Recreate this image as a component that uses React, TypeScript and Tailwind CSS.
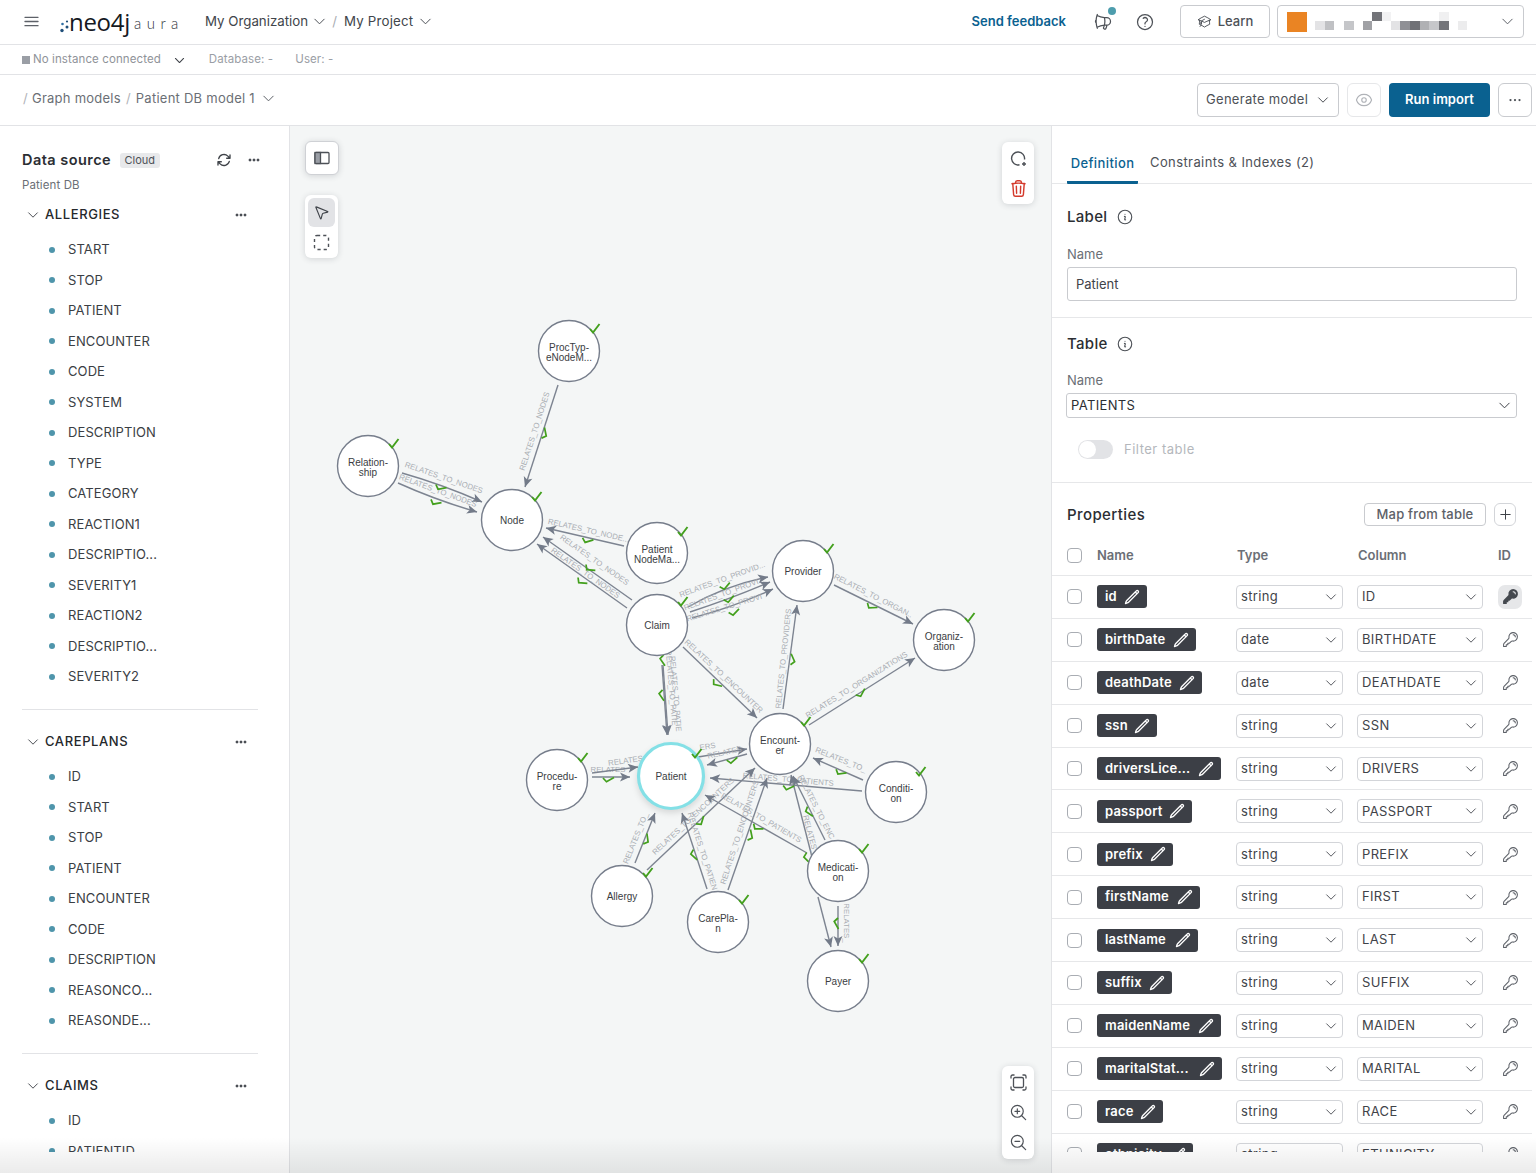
import React from "react";
import { MousePointer2 } from "lucide-react";
import {
  HiOutlineBars3, HiOutlineChevronDown, HiOutlineMegaphone, HiOutlineQuestionMarkCircle,
  HiOutlineAcademicCap, HiOutlineEye, HiEllipsisHorizontal, HiOutlineArrowPath,
  HiOutlineInformationCircle, HiOutlinePlus, HiOutlinePencil, HiOutlineKey, HiKey,
  HiOutlineTrash, HiOutlineMagnifyingGlassPlus, HiOutlineMagnifyingGlassMinus,
} from "react-icons/hi2";

type Edge = { p: number[]; c?: number; l?: [string, number, number, number]; k?: [number, number, number] };

const edges: Edge[] = [
  { p: [558, 385, 525, 487], l: ["RELATES_TO_NODES", 537, 432, -72], k: [545, 434, -72] },
  { p: [402, 473, 482, 502], c: -3, l: ["RELATES_TO_NODES", 443, 480, 19], k: [440, 488, 19] },
  { p: [398, 483, 477, 512], c: 3, l: ["RELATES_TO_NODES", 437, 493, 20], k: [435, 503, 20] },
  { p: [624, 546, 546, 528], l: ["RELATES_TO_NODE...", 588, 533, 13], k: [587, 541, 13] },
  { p: [632, 600, 543, 537], l: ["RELATES_TO_NODES", 593, 562, 35], k: [589, 569, 35] },
  { p: [627, 608, 537, 544], l: ["RELATES_TO_NODES", 584, 575, 35], k: [581, 582, 35] },
  { p: [688, 607, 768, 577], c: -7, l: ["RELATES_TO_PROVID...", 723, 582, -20], k: [725, 587, -20] },
  { p: [690, 612, 770, 582], c: 2, l: ["RELATES_TO_PROVI", 722, 597, -20], k: [729, 600, -20] },
  { p: [692, 618, 773, 589], c: 4, l: ["RELATES_TO_PROVI", 725, 610, -17], k: [734, 613, -17] },
  { p: [834, 585, 913, 624], l: ["RELATES_TO_ORGAN..", 872, 598, 27], k: [871, 607, 27] },
  { p: [783, 709, 797, 605], l: ["RELATES_TO_PROVIDERS", 786, 659, -84], k: [793, 660, -84] },
  { p: [809, 725, 915, 658], l: ["RELATES_TO_ORGANIZATIONS", 858, 687, -32], k: [861, 694, -32] },
  { p: [683, 647, 757, 718], l: ["RELATES_TO_ENCOUNTER", 722, 678, 43], k: [716, 684, 43] },
  { p: [662, 665, 667, 735], l: ["RELATES_TO_PATIE", 669, 688, 85], k: [662, 660, 85] },
  { p: [663, 665, 668, 735], l: ["RELATES_TO_PATIE", 673, 694, 85], k: [661, 695, 85] },
  { p: [698, 757, 747, 749], l: ["ERS", 708, 749, -9] },
  { p: [747, 754, 707, 765], l: ["RELATES", 725, 755, -12], k: [732, 761, -12] },
  { p: [863, 780, 813, 758], l: ["RELATES_TO_", 840, 762, 22], k: [840, 773, 22] },
  { p: [862, 791, 710, 778], l: ["RELATES_TO_PATIENTS", 788, 782, 5], k: [788, 788, 5] },
  { p: [592, 777, 630, 777], l: ["RELATES", 608, 772, 0], k: [608, 780, 0] },
  { p: [592, 773, 638, 767], l: ["RELATES_", 628, 763, -8] },
  { p: [635, 863, 655, 813], l: ["RELATES_TO_", 638, 839, -68], k: [647, 840, -68] },
  { p: [647, 870, 755, 768], l: ["RELATES_TO_ENCOUNTERS", 695, 818, -43], k: [701, 822, -43] },
  { p: [707, 889, 682, 813], l: ["RELATES_TO_PATIEN", 700, 852, 72], k: [693, 855, 72] },
  { p: [728, 890, 767, 778], l: ["RELATES_TO_ENCOUNTERS", 742, 833, -72], k: [751, 836, -72] },
  { p: [807, 853, 705, 795], l: ["RELATES_TO_PATIENTS", 760, 820, 30], k: [757, 828, 30] },
  { p: [825, 840, 793, 776], l: ["RELATES_TO_ENC", 814, 808, 63], k: [808, 812, 63] },
  { p: [812, 857, 791, 775], l: ["RELATES_", 808, 835, 75], k: [806, 858, 75] },
  { p: [818, 897, 831, 947] },
  { p: [838, 906, 838, 946], l: ["RELATES_", 844, 923, 90], k: [836, 923, 90] },
];

const nodes: { x: number; y: number; t: string[]; cx: number; cy: number; active?: boolean }[] = [
  { x: 569, y: 351, t: ["ProcTyp-", "eNodeM..."], cx: 595, cy: 329 },
  { x: 368, y: 466, t: ["Relation-", "ship"], cx: 394, cy: 444 },
  { x: 512, y: 520, t: ["Node"], cx: 537, cy: 497 },
  { x: 657, y: 553, t: ["Patient", "NodeMa..."], cx: 683, cy: 532 },
  { x: 657, y: 625, t: ["Claim"], cx: 683, cy: 602 },
  { x: 803, y: 571, t: ["Provider"], cx: 829, cy: 549 },
  { x: 944, y: 640, t: ["Organiz-", "ation"], cx: 970, cy: 618 },
  { x: 780, y: 744, t: ["Encount-", "er"], cx: 806, cy: 722 },
  { x: 671, y: 776, t: ["Patient"], cx: 697, cy: 754, active: true },
  { x: 557, y: 780, t: ["Procedu-", "re"], cx: 583, cy: 758 },
  { x: 896, y: 792, t: ["Conditi-", "on"], cx: 921, cy: 772 },
  { x: 622, y: 896, t: ["Allergy"], cx: 648, cy: 873 },
  { x: 718, y: 922, t: ["CarePla-", "n"], cx: 744, cy: 900 },
  { x: 838, y: 871, t: ["Medicati-", "on"], cx: 864, cy: 849 },
  { x: 838, y: 981, t: ["Payer"], cx: 864, cy: 959 },
];

function arrow(x1: number, y1: number, x2: number, y2: number) {
  const a = Math.atan2(y2 - y1, x2 - x1);
  const len = 10, w = 4.5;
  const bx = x2 - len * Math.cos(a), by = y2 - len * Math.sin(a);
  const nx = -Math.sin(a) * w, ny = Math.cos(a) * w;
  const ix = x2 - (len - 2.5) * Math.cos(a), iy = y2 - (len - 2.5) * Math.sin(a);
  return `${x2},${y2} ${bx + nx},${by + ny} ${ix},${iy} ${bx - nx},${by - ny}`;
}

function Graph() {
  return (
    <svg className="absolute inset-0" width={761} height={1047} viewBox="290 126 761 1047">
      <g style={{ fontFamily: '"Liberation Sans", sans-serif' }}>
        {edges.map((e, i) => {
          const [x1, y1, x2, y2] = e.p;
          const c = e.c ?? 0;
          const dx = x2 - x1, dy = y2 - y1, n = Math.hypot(dx, dy);
          const mx = (x1 + x2) / 2 - (dy / n) * c, my = (y1 + y2) / 2 + (dx / n) * c;
          return (
            <g key={i}>
              <path d={`M${x1},${y1} Q${mx},${my} ${x2},${y2}`} fill="none" stroke="#7d8491" strokeWidth={1.4} />
              <polygon points={c ? arrow(mx, my, x2, y2) : arrow(x1, y1, x2, y2)} fill="#737b89" />
              {e.l && (
                <text x={0} y={0} fontSize={7.8} fill="#a9adb3" textAnchor="middle" transform={`translate(${e.l[1]},${e.l[2]}) rotate(${e.l[3]})`}>
                  {e.l[0]}
                </text>
              )}
            </g>
          );
        })}
        {edges.map((e, i) =>
          e.k ? (
            <path key={i} d="M-5,-2 L-1.500,1.800 L6,-2.500" fill="none" stroke="#43a01d" strokeWidth={1.7} transform={`translate(${e.k[0]},${e.k[1]}) rotate(${e.k[2]})`} />
          ) : null
        )}
        {nodes.map((n) => (
          <g key={n.t.join("")}>
            {n.active ? (
              <circle cx={n.x} cy={n.y} r={32.5} fill="#fff" stroke="#84e0e6" strokeWidth={3.2} className="drop-shadow-md" />
            ) : (
              <circle cx={n.x} cy={n.y} r={30.5} fill="#fff" stroke="#767d8b" strokeWidth={1.4} />
            )}
            {n.t.map((line, idx) => (
              <text key={idx} x={n.x} y={n.y + (n.t.length === 1 ? 4 : idx === 0 ? -0.5 : 9.5)} fontSize={10} fill="#3a3d42" textAnchor="middle">
                {line}
              </text>
            ))}
            <path d={`M${n.cx - 5},${n.cy} l3,3.5 l6.5,-8.5`} fill="none" stroke="#43a01d" strokeWidth={1.9} />
          </g>
        ))}
      </g>
    </svg>
  );
}

const Chevron = ({ className = "w-[15px] h-[15px] text-[#4d5157]" }: { className?: string }) => (
  <HiOutlineChevronDown className={className} strokeWidth={1.6} />
);

function Logo() {
  return (
    <div className="flex items-center ml-[19px] w-[122px] relative h-[30px]">
      <svg className="w-[9px] h-[14px] mt-[8px] shrink-0" viewBox="0 0 9 14">
        <circle cx="2" cy="11.500" r="1.700" fill="#1f4e79" />
        <circle cx="7" cy="8" r="1.500" fill="#1f4e79" />
        <circle cx="2.500" cy="5" r="1.300" fill="#2f6ea3" />
        <circle cx="7" cy="2.500" r="1.100" fill="#1f4e79" />
      </svg>
      <span className="text-[24px] leading-[30px] text-[#15191f] tracking-[-0.3px] font-[500] [font-family:'Open_Sans',sans-serif]">neo4j</span>
      <span className="ml-[4px] mt-[2px] text-[15px] leading-[20px] tracking-[5.5px] text-[#30343a] font-[300] [font-family:Lato,sans-serif]">aura</span>
    </div>
  );
}

function Header() {
  const noise: [number, number, number, number, string][] = [
    [1315, 20, 10, 9, "#e3e3e5"], [1325, 20, 9, 9, "#c0c1c4"], [1344, 20, 10, 9, "#c5c6c9"],
    [1363, 20, 9, 9, "#a0a1a5"], [1372, 11, 10, 9, "#737479"], [1382, 11, 9, 9, "#f2f2f3"],
    [1391, 20, 9, 9, "#e3e3e5"], [1400, 20, 10, 9, "#8f9095"], [1410, 20, 10, 9, "#707176"],
    [1420, 20, 9, 9, "#b0b1b4"], [1429, 20, 10, 9, "#c6c7ca"], [1439, 20, 10, 9, "#737479"],
    [1439, 11, 10, 9, "#f0f0f1"], [1458, 20, 9, 9, "#ececed"],
  ];
  return (
    <div className="h-[45px] shrink-0 border-b border-[#e2e3e6] flex items-center relative text-[#41454b] pb-[1px]">
      <HiOutlineBars3 className="w-[19px] h-[19px] ml-[22px] text-[#5d6168]" strokeWidth={1.6} />
      <Logo />
      <div className="flex items-center ml-[23px] text-[13.3px] gap-[4px]">
        <span>My Organization</span>
        <Chevron />
        <span className="text-[#a9adb3] ml-[1px]">/</span>
        <span className="ml-[3px] tracking-[0.2px]">My Project</span>
        <Chevron className="w-[15px] h-[15px] text-[#4d5157] ml-[1px]" />
      </div>
      <div className="flex-1" />
      <span className="text-[13px] font-[600] text-[#0a6190]">Send feedback</span>
      <div className="relative ml-[27px] w-[20px] h-[20px]">
        <HiOutlineMegaphone className="w-[20px] h-[20px] -scale-x-100 text-[#4d5157]" />
        <span className="absolute top-[-5px] right-[-3px] w-[8px] h-[8px] rounded-full bg-[#4d9dad]" />
      </div>
      <HiOutlineQuestionMarkCircle className="w-[20px] h-[20px] ml-[22px] text-[#4d5157]" />
      <div className="ml-[25px] w-[90px] h-[33px] border border-[#c9cbcf] rounded-[4px] flex items-center justify-center gap-[6px] text-[13px] font-[500] text-[#4d5157]">
        <HiOutlineAcademicCap className="w-[15px] h-[15px]" />
        Learn
      </div>
      <div className="ml-[7px] mr-[12px] w-[247px] h-[33px] border border-[#c9cbcf] rounded-[4px] flex items-center relative">
        <span className="ml-[9px] w-[20px] h-[20px] bg-[#ea8423]" />
        <svg className="absolute left-[-1px] top-[-1px]" width="247" height="33" viewBox="1277 4 247 33">
          {noise.map((n, i) => <rect key={i} x={n[0]} y={n[1]} width={n[2]} height={n[3]} fill={n[4]} />)}
        </svg>
        <Chevron className="w-[15px] h-[15px] text-[#5d6168] ml-auto mr-[8px]" />
      </div>
    </div>
  );
}

function SubBar() {
  return (
    <div className="h-[30px] shrink-0 border-b border-[#e2e3e6] flex items-center pt-[1px] text-[11.5px] tracking-[0.1px] text-[#9a9ea5]">
      <span className="ml-[22px] w-[8px] h-[8px] bg-[#9a9ea5]" />
      <span className="ml-[3px] text-[#8f9399]">No instance connected</span>
      <HiOutlineChevronDown className="ml-[12px] w-[13px] h-[13px] text-[#3f4349]" strokeWidth={2} />
      <span className="ml-[23px]">Database: -</span>
      <span className="ml-[22px]">User: -</span>
    </div>
  );
}

function Crumbs() {
  return (
    <div className="h-[51px] shrink-0 border-b border-[#e2e3e6] flex items-center relative">
      <div className="flex items-center ml-[23px] text-[13px] text-[#6b6f76] tracking-[0.25px] mt-[-3px]">
        <span className="text-[#b0b3b8] mr-[4px]">/</span>
        <span>Graph models</span>
        <span className="text-[#b0b3b8] mx-[5px]">/</span>
        <span>Patient DB model 1</span>
        <Chevron className="w-[15px] h-[15px] text-[#5d6168] ml-[6px]" />
      </div>
      <div className="flex-1" />
      <div className="flex items-center gap-[8px] mr-[4px] mt-[-1px]">
        <div className="w-[142px] h-[34px] border border-[#c9cbcf] rounded-[4px] flex items-center justify-between px-[8px] pt-[1px] text-[13px] tracking-[0.3px] text-[#4d5157]">
          Generate model
          <Chevron className="w-[14px] h-[14px] text-[#3f4349]" />
        </div>
        <div className="w-[34px] h-[34px] border border-[#e6e7e9] rounded-[6px] flex items-center justify-center">
          <HiOutlineEye className="w-[18px] h-[18px] text-[#b0b3b8]" />
        </div>
        <div className="w-[101px] h-[34px] bg-[#0a6190] rounded-[4px] flex items-center justify-center pt-[1px] text-white text-[13px] font-[600]">
          Run import
        </div>
        <div className="w-[34px] h-[34px] border border-[#c9cbcf] rounded-[6px] flex items-center justify-center">
          <HiEllipsisHorizontal className="w-[18px] h-[18px] text-[#4d5157]" />
        </div>
      </div>
    </div>
  );
}

const sections: { name: string; items: string[]; clip?: boolean }[] = [
  { name: "ALLERGIES", items: ["START", "STOP", "PATIENT", "ENCOUNTER", "CODE", "SYSTEM", "DESCRIPTION", "TYPE", "CATEGORY", "REACTION1", "DESCRIPTIO...", "SEVERITY1", "REACTION2", "DESCRIPTIO...", "SEVERITY2"] },
  { name: "CAREPLANS", items: ["ID", "START", "STOP", "PATIENT", "ENCOUNTER", "CODE", "DESCRIPTION", "REASONCO...", "REASONDE..."] },
  { name: "CLAIMS", items: ["ID", "PATIENTID"], clip: true },
];

function LeftPanel() {
  return (
    <div className="w-[290px] shrink-0 border-r border-[#e2e3e6] bg-white text-[#2f3338]">
      <div className="h-[1026px] overflow-hidden">
        <div className="flex items-center h-[18px] mt-[25px] ml-[22px]">
          <span className="text-[14.5px] font-[600] tracking-[0.45px] text-[#2b2e33]">Data source</span>
          <span className="ml-[9px] h-[15px] px-[4.500px] bg-[#e8e9eb] rounded-[3px] text-[11px] leading-[15px] text-[#4d5157]">Cloud</span>
          <HiOutlineArrowPath className="w-[16px] h-[16px] ml-[56px] text-[#3f4349]" strokeWidth={2} />
          <HiEllipsisHorizontal className="w-[16px] h-[16px] ml-[14px] text-[#3f4349]" strokeWidth={1.5} />
        </div>
        <div className="ml-[22px] mt-[9px] h-[14px] text-[11.5px] tracking-[0.1px] leading-[14px] text-[#6b6f76]">Patient DB</div>
        <div className="mt-[13px]">
          {sections.map((s, i) => (
            <div key={s.name} className={i > 0 ? "mt-[22.500px]" : ""}>
              <div className="flex items-center h-[20px] ml-[26px] mb-[9.500px]">
                <Chevron className="w-[14px] h-[14px] text-[#3f4349]" />
                <span className="ml-[5px] text-[13px] font-[500] tracking-[0.6px] text-[#25282c]">{s.name}</span>
                <HiEllipsisHorizontal className="w-[16px] h-[16px] ml-auto mr-[40px] text-[#3f4349]" strokeWidth={1.5} />
              </div>
              <div className="ml-[49px]">
                {s.items.map((it, idx) => (
                  <div key={idx} className="flex items-center h-[30.500px]">
                    <span className="w-[6px] h-[6px] rounded-full bg-[#4f95ab]" />
                    <span className="ml-[13px] text-[13px] tracking-[0.1px] text-[#3a3e44]">{it}</span>
                  </div>
                ))}
              </div>
              {!s.clip && <div className="mt-[16.500px] ml-[22px] w-[236px] border-b border-[#e2e3e6]" />}
            </div>
          ))}
        </div>
      </div>
    </div>
  );
}

function ToolPanel({ className, children }: { className: string; children: React.ReactNode }) {
  return <div className={`absolute bg-white rounded-[6px] shadow-[0_1px_6px_rgba(30,40,50,0.16)] flex flex-col items-center ${className}`}>{children}</div>;
}

function Canvas() {
  return (
    <div className="flex-1 relative bg-[#f4f6f6] overflow-hidden">
      <Graph />
      <ToolPanel className="left-[15px] top-[15px] w-[34px] h-[34px] border border-[#cfd1d5] justify-center">
        <svg className="w-[16px] h-[16px]" viewBox="0 0 16 16" fill="none" stroke="#4d5157" strokeWidth="1.3">
          <rect x="1" y="2.500" width="14" height="11" rx="1" />
          <rect x="1" y="2.500" width="5.500" height="11" fill="#9a9ea5" />
        </svg>
      </ToolPanel>
      <ToolPanel className="left-[15px] top-[69px] w-[33px] h-[63px] pt-[3px]">
        <div className="w-[27px] h-[29px] bg-[#e2e3e6] rounded-[6px] flex items-center justify-center">
          <MousePointer2 className="w-[17px] h-[17px] text-[#3f4349]" strokeWidth={1.6} />
        </div>
        <svg className="w-[17px] h-[17px] mt-[7px]" viewBox="0 0 17 17" fill="none" stroke="#4d5157" strokeWidth="1.4" strokeDasharray="3.200 3">
          <rect x="1.500" y="1.500" width="14" height="14" rx="2.500" />
        </svg>
      </ToolPanel>
      <ToolPanel className="left-[712px] top-[16px] w-[32px] h-[62px] pt-[8px]">
        <svg className="w-[17px] h-[17px]" viewBox="0 0 17 17" fill="none" stroke="#4d5157" strokeWidth="1.4">
          <path d="M14.500 9.500A6.500 6.500 0 1 0 9.500 14.800" />
          <path d="M14 12v4M12 14h4" />
        </svg>
        <HiOutlineTrash className="w-[19px] h-[19px] mt-[12px] text-[#d43a2c]" strokeWidth={1.8} />
      </ToolPanel>
      <ToolPanel className="left-[712px] top-[940px] w-[32px] h-[93px] pt-[8px] z-20">
        <svg className="w-[17px] h-[17px]" viewBox="0 0 17 17" fill="none" stroke="#4d5157" strokeWidth="1.3">
          <rect x="3.500" y="3.500" width="10" height="10" rx="1.500" />
          <path d="M1 4.500V2.500A1.500 1.500 0 0 1 2.500 1H4.500M12.500 1h2A1.500 1.500 0 0 1 16 2.500V4.500M16 12.500v2a1.500 1.500 0 0 1-1.500 1.500h-2M4.500 16h-2A1.500 1.500 0 0 1 1 14.500v-2" />
        </svg>
        <HiOutlineMagnifyingGlassPlus className="w-[19px] h-[19px] mt-[12px] text-[#4d5157]" />
        <HiOutlineMagnifyingGlassMinus className="w-[19px] h-[19px] mt-[11px] text-[#4d5157]" />
      </ToolPanel>
    </div>
  );
}

const Sel = ({ w, t }: { w: string; t: string }) => (
  <div className={`${w} h-[24px] border border-[#d3d5d9] rounded-[4px] flex items-center justify-between pl-[4px] pr-[4px] text-[13px] tracking-[0.35px] text-[#3f4349]`}>
    {t}
    <Chevron className="w-[14px] h-[14px] text-[#4d5157]" />
  </div>
);

const props: [string, string, string, string][] = [
  ["id", "w-[50px]", "string", "ID"],
  ["birthDate", "w-[99px]", "date", "BIRTHDATE"],
  ["deathDate", "w-[105px]", "date", "DEATHDATE"],
  ["ssn", "w-[60px]", "string", "SSN"],
  ["driversLice...", "w-[124px]", "string", "DRIVERS"],
  ["passport", "w-[95px]", "string", "PASSPORT"],
  ["prefix", "w-[76px]", "string", "PREFIX"],
  ["firstName", "w-[103px]", "string", "FIRST"],
  ["lastName", "w-[101px]", "string", "LAST"],
  ["suffix", "w-[75px]", "string", "SUFFIX"],
  ["maidenName", "w-[124px]", "string", "MAIDEN"],
  ["maritalStat...", "w-[125px]", "string", "MARITAL"],
  ["race", "w-[66px]", "string", "RACE"],
  ["ethnicity", "w-[96px]", "string", "ETHNICITY"],
];

const Box = () => <span className="w-[15px] h-[15px] border border-[#a9adb3] rounded-[4px] bg-white" />;

function RightPanel() {
  return (
    <div className="w-[485px] shrink-0 border-l border-[#e2e3e6] bg-white pr-[4px] text-[#3f4349]">
      <div className="h-[1026px] overflow-hidden">
        <div className="h-[58px] border-b border-[#e6e7e9] flex items-end pl-[15px] text-[13px] tracking-[0.4px]">
          <div className="w-[71px] h-[58px] flex items-center justify-center pt-[20px] border-b-[3px] border-[#0a6190] text-[#0a6190] font-[500] -mb-[1px] rounded-b-[1px]">Definition</div>
          <div className="ml-[12px] h-[58px] flex items-center pt-[18px] text-[#4d5157]">Constraints &amp; Indexes (2)</div>
        </div>
        <div className="h-[134px] border-b border-[#e6e7e9] px-[15px] pt-[23px]">
          <div className="flex items-center h-[20px] text-[15px] tracking-[0.3px] font-[500] text-[#2b2e33]">
            Label <HiOutlineInformationCircle className="ml-[9px] w-[18px] h-[18px] text-[#4d5157]" />
          </div>
          <div className="mt-[19px] h-[16px] text-[13px] leading-[16px] text-[#6b6f76]">Name</div>
          <div className="mt-[5px] h-[34px] w-[450px] border border-[#c9cbcf] rounded-[3px] flex items-center pl-[8px] pt-[1px] text-[13px]">Patient</div>
        </div>
        <div className="h-[165px] border-b border-[#e6e7e9] px-[15px] pt-[16px]">
          <div className="flex items-center h-[20px] text-[15px] tracking-[0.3px] font-[500] text-[#2b2e33]">
            Table <HiOutlineInformationCircle className="ml-[8px] w-[18px] h-[18px] text-[#4d5157]" />
          </div>
          <div className="mt-[18px] h-[16px] text-[13px] leading-[16px] text-[#6b6f76]">Name</div>
          <div className="mt-[5px] h-[25px] w-[451px] -ml-[1px] border border-[#c9cbcf] rounded-[3px] flex items-center justify-between px-[4px] text-[13px] tracking-[0.35px] text-[#2b2e33]">
            PATIENTS
            <Chevron className="w-[15px] h-[15px] text-[#3f4349]" />
          </div>
          <div className="mt-[22px] ml-[11px] flex items-center">
            <div className="w-[35px] h-[19px] rounded-full bg-[#e2e3e6] relative">
              <span className="absolute left-[1px] top-[1px] w-[17px] h-[17px] rounded-full bg-white" />
            </div>
            <span className="ml-[11px] text-[13px] tracking-[0.5px] text-[#b4b7bc]">Filter table</span>
          </div>
        </div>
        <div className="px-[15px] pt-[20px]">
          <div className="flex items-center h-[23px]">
            <span className="pt-[2px] text-[15px] tracking-[0.4px] font-[500] text-[#2b2e33]">Properties</span>
            <div className="ml-auto w-[122px] h-[23px] border border-[#c9cbcf] rounded-[4px] flex items-center justify-center text-[13px] tracking-[0.2px] font-[500] text-[#5d6168]">Map from table</div>
            <div className="ml-[8px] mr-[1px] w-[22px] h-[23px] border border-[#d3d5d9] rounded-[6px] flex items-center justify-center">
              <HiOutlinePlus className="w-[15px] h-[15px]" strokeWidth={1.6} />
            </div>
          </div>
        </div>
        <div className="mt-[10px] h-[40px] border-b border-[#e6e7e9] pl-[15px] grid grid-cols-[30px_139px_121px_141px_1fr] items-center text-[13px] font-[600] text-[#6b6f76]">
          <Box />
          <span>Name</span>
          <span className="ml-[1px]">Type</span>
          <span className="ml-[1px]">Column</span>
          <span>ID</span>
        </div>
        {props.map(([name, w, type, col], i) => (
          <div key={name} className="h-[42.900px] border-b border-[#e6e7e9] pl-[15px] grid grid-cols-[30px_139px_121px_141px_1fr] items-center">
            <Box />
            <div className={`${w} h-[23px] bg-[#3c3f46] rounded-[3px] flex items-center justify-between pl-[8px] pr-[7px] text-white text-[13px] tracking-[0.2px] font-[600]`}>
              {name}
              <HiOutlinePencil className="w-[16px] h-[16px] shrink-0" strokeWidth={2} />
            </div>
            <Sel w="w-[107px]" t={type} />
            <Sel w="w-[126px]" t={col} />
            {i === 0 ? (
              <div className="w-[24px] h-[24px] rounded-[7px] bg-[#e6e7e9] flex items-center justify-center">
                <HiKey className="w-[17px] h-[17px] text-[#45494f]" />
              </div>
            ) : (
              <div className="w-[24px] h-[24px] flex items-center justify-center">
                <HiOutlineKey className="w-[17px] h-[17px] text-[#5d6168]" />
              </div>
            )}
          </div>
        ))}
      </div>
    </div>
  );
}

export default function App() {
  return (
    <div className="relative w-[1536px] h-[1173px] overflow-hidden bg-white flex flex-col [font-family:Inter,sans-serif]">
      <Header />
      <SubBar />
      <Crumbs />
      <div className="flex flex-1 min-h-0">
        <LeftPanel />
        <Canvas />
        <RightPanel />
      </div>
      <div className="absolute left-0 right-0 bottom-0 h-[36px] z-10 bg-gradient-to-b from-[#00000000] to-[#00000014]" />
    </div>
  );
}
